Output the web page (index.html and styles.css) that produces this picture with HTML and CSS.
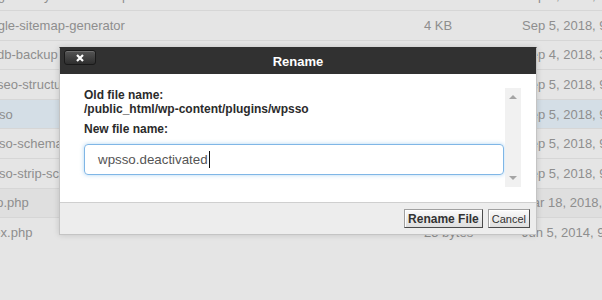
FILE: index.html
```html
<!DOCTYPE html>
<html lang="en">
<head>
    <meta charset="UTF-8">
    <title>Rename</title>
    <link rel="stylesheet" href="styles.css">
</head>
<body>
    <!-- file list behind the dialog -->
    <div class="files">
        <div class="row"><span>google-analytics-for-wordpress</span><span>1 KB</span><span>Sep 5, 2018, 9:12 AM</span></div>
        <div class="row"><span>google-sitemap-generator</span><span>4 KB</span><span>Sep 5, 2018, 9:12 AM</span></div>
        <div class="row"><span>wp-db-backup</span><span>4 KB</span><span>Sep 4, 2018, 3:40 PM</span></div>
        <div class="row"><span>wp-seo-structured-data-schema</span><span>4 KB</span><span>Sep 5, 2018, 9:12 AM</span></div>
        <div class="row selected"><span>wpsso</span><span>4 KB</span><span>Sep 5, 2018, 9:12 AM</span></div>
        <div class="row"><span>wpsso-schema-json-ld</span><span>4 KB</span><span>Sep 5, 2018, 9:12 AM</span></div>
        <div class="row"><span>wpsso-strip-schema-microdata</span><span>4 KB</span><span>Sep 5, 2018, 9:12 AM</span></div>
        <div class="row alt"><span>hello.php</span><span>2 KB</span><span>Mar 18, 2018, 8:01 AM</span></div>
        <div class="row last"><span>index.php</span><span>25 bytes</span><span>Jun 5, 2014, 9:43 PM</span></div>
    </div>

    <!-- rename dialog -->
    <div class="dialog">
        <div class="dialog-head">
            <button class="close-btn" title="Close">
                <svg width="8" height="8" viewBox="0 0 8 8"><path d="M1 1L7 7M7 1L1 7" stroke="#fff" stroke-width="2.2"/></svg>
            </button>
            <span class="dialog-title">Rename</span>
        </div>
        <div class="dialog-body">
            <div class="scroll-box">
                <div class="scroll-content">
                    <div class="label">Old file name:</div>
                    <div class="label">/public_html/wp-content/plugins/wpsso</div>
                    <div class="label new-label">New file name:</div>
                    <div class="input">wpsso.deactivated<span class="caret"></span></div>
                </div>
                <div class="scrollbar">
                    <span class="arrow up"></span>
                    <span class="arrow down"></span>
                </div>
            </div>
        </div>
        <div class="dialog-foot">
            <button class="btn btn-main">Rename File</button>
            <button class="btn">Cancel</button>
        </div>
    </div>
</body>
</html>
```

FILE: styles.css
```css
body {
    margin: 0;
    height: 300px;
    overflow: hidden;
    background: #e5e5e5;
    font-family: "Liberation Sans", Arial, sans-serif;
    color: #8e8e8e;
    font-size: 13px;
}
.files {
    margin: -18.6px 0 0 -24px;
    width: 700px;
}
.row {
    display: grid;
    grid-template-columns: 448px 98px 1fr;
    align-items: center;
    height: 29.6px;
    box-sizing: border-box;
    border-bottom: 1px solid #d6d6d6;
    white-space: nowrap;
}
.row.selected {
    background: #d4dee6;
}
.row.alt {
    background: #dfdfdf;
}
.row.last {
    border-bottom: none;
}
.dialog {
    position: absolute;
    left: 59px;
    top: 47px;
    width: 478px;
    box-sizing: border-box;
    border: 1px solid #c4c4c4;
    border-top-color: #313131;
    background: #fff;
    box-shadow: 0 0 6px rgba(0, 0, 0, 0.15);
    color: #2b2b2b;
}
.dialog-head {
    display: grid;
    grid-template-columns: 1fr auto 1fr;
    height: 26px;
    background: #313131;
}
.close-btn {
    display: flex;
    align-items: center;
    justify-content: center;
    justify-self: start;
    align-self: start;
    margin: 2px 0 0 4px;
    width: 32px;
    height: 15px;
    padding: 0;
    border: 1px solid #1a1a1a;
    border-radius: 3px;
    background: linear-gradient(#555, #2e2e2e);
    box-shadow: inset 0 1px 0 #6e6e6e;
}
.dialog-title {
    align-self: center;
    color: #fff;
    font-weight: bold;
    font-size: 13px;
}
.dialog-body {
    padding: 14px 15px 15px 24px;
}
.scroll-box {
    display: flex;
    height: 99px;
}
.scroll-content {
    flex: 1;
}
.label {
    font-weight: bold;
    font-size: 12px;
    line-height: 14px;
    color: #2b2b2b;
}
.new-label {
    margin-top: 6px;
}
.input {
    display: flex;
    align-items: center;
    width: 420px;
    height: 31px;
    margin-top: 8px;
    padding-left: 13px;
    box-sizing: border-box;
    border: 1px solid #7fb6e6;
    border-radius: 4px;
    box-shadow: 0 0 4px rgba(102, 175, 233, 0.5);
    font-size: 13.33px;
    color: #555;
}
.caret {
    width: 1px;
    height: 17px;
    margin-left: 1px;
    background: #111;
}
.scrollbar {
    display: flex;
    flex-direction: column;
    justify-content: space-between;
    align-items: center;
    width: 16px;
    padding: 7px 0;
    box-sizing: border-box;
    background: #f1f1f1;
}
.arrow {
    width: 0;
    height: 0;
    border-left: 4px solid transparent;
    border-right: 4px solid transparent;
}
.arrow.up {
    border-bottom: 4px solid #a5a5a5;
}
.arrow.down {
    border-top: 4px solid #a5a5a5;
}
.dialog-foot {
    display: flex;
    justify-content: flex-end;
    gap: 5px;
    padding: 6px 6px;
    border-top: 1px solid #cfcfcf;
    background: #ededed;
}
.btn {
    height: 19px;
    padding: 0 3px;
    border: 1px solid #a0a0a0;
    border-right-color: #4a4a4a;
    border-bottom-color: #4a4a4a;
    background: linear-gradient(#fbfbfb, #dedede);
    box-shadow: inset 1px 1px 0 #fff;
    font-family: "Liberation Sans", Arial, sans-serif;
    font-size: 11px;
    color: #333;
}
.btn-main {
    font-size: 12px;
    font-weight: bold;
}
```
